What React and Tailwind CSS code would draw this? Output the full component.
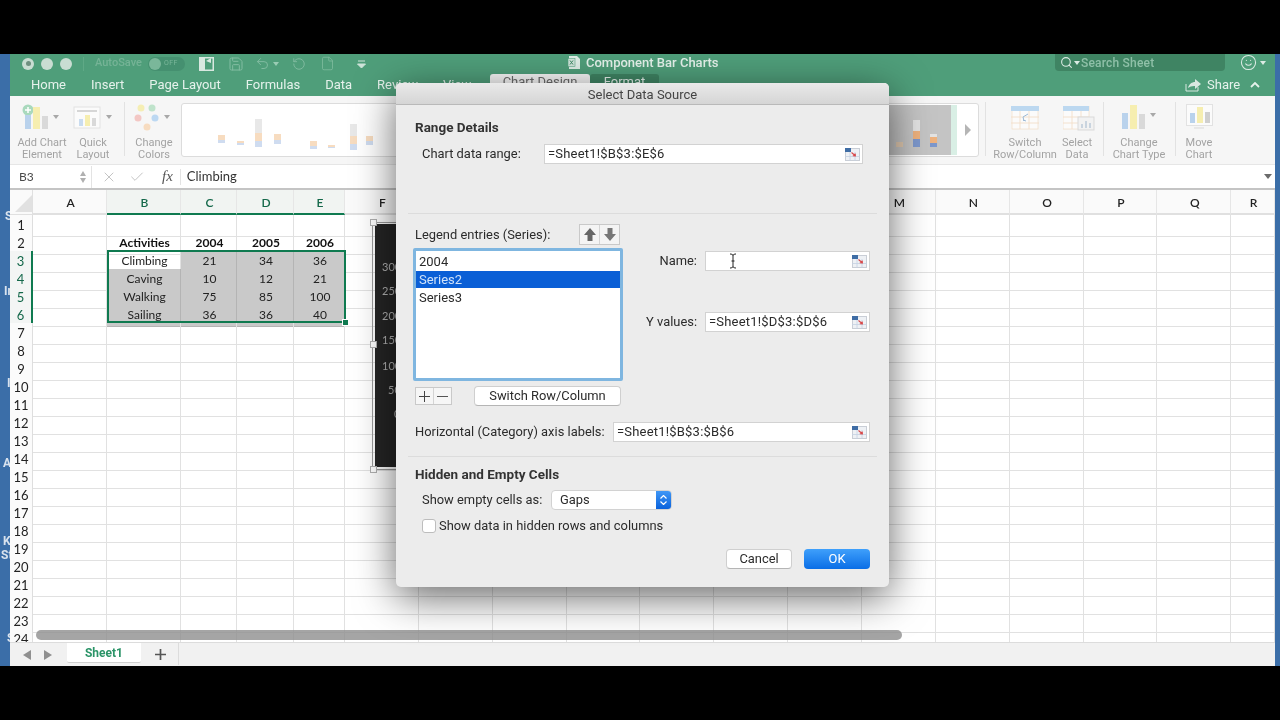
import React from "react";
import { Search, Smile, Save, Undo2, RotateCw, File as FileIcon, X, Check } from "lucide-react";

const COLS = ["A","B","C","D","E","F","G","H","I","J","K","L","M","N","O","P","Q","R"];
const GRID = "grid grid-cols-[23px_74px_74px_56px_57px_51px_repeat(12,73.86px)_1fr]";
const DATA = {
  2: ["Activities","2004","2005","2006"],
  3: ["Climbing","21","34","36"],
  4: ["Caving","10","12","21"],
  5: ["Walking","75","85","100"],
  6: ["Sailing","36","36","40"],
};

function RibbonItem({ width, ml = 0, l1, l2, children }) {
  return (
    <div className="flex flex-col items-center shrink-0" style={{ width, marginLeft: ml }}>
      <div className="h-[41px] w-full flex items-start justify-center pt-[10px]">{children}</div>
      <div className="text-[11px] leading-[11.5px] text-[#a3a3a3] text-center whitespace-nowrap">{l1}<br />{l2}</div>
    </div>
  );
}

function Sep() {
  return <div className="w-px h-[54px] bg-[#e2e2e2] mt-[6px] shrink-0" />;
}

function RangeIcon() {
  return (
    <svg width="15" height="13" viewBox="0 0 15 13" className="shrink-0">
      <rect x="0.5" y="0.5" width="14" height="12" fill="#eef1f5" stroke="#c9ced6" />
      <rect x="0" y="0" width="6" height="4" fill="#3f6da5" />
      <path d="M0 8.5h15M5 4v9M10 4v9" stroke="#c4d2e2" strokeWidth="0.8" />
      <path d="M6.500 4.500l3.500 3M7.800 7.800l2.600.2-.3-2.500" stroke="#d8484a" strokeWidth="1.100" fill="none" />
    </svg>
  );
}

function RangeInput({ w, value }) {
  return (
    <div className="h-[20px] bg-white border border-[#d2d2d2] flex items-center justify-between pl-[3px] pr-[2px] shrink-0 text-[13px] tracking-[0.2px] text-[#2b2b2b]" style={{ width: w }}>
      <span>{value}</span>
      <RangeIcon />
    </div>
  );
}

function Thumb({ bars, w }) {
  return (
    <svg width={w} height="54" viewBox={`0 0 ${w} 54`} className="shrink-0">
      {bars.map((b, i) => (
        <g key={i}>
          <rect x={b[0]} y={b[1]} width="7" height={b[2]} fill="#e8e8e8" />
          <rect x={b[0]} y={b[1] + b[2]} width="7" height={b[3]} fill="#f7dcc0" />
          <rect x={b[0]} y={b[1] + b[2] + b[3]} width="7" height={b[4]} fill="#cfdcf0" />
        </g>
      ))}
    </svg>
  );
}

export default function App() {
  const rows = [];
  for (let r = 1; r <= 24; r++) rows.push(r);
  return (
    <div className="relative w-[1280px] h-[720px] bg-black overflow-hidden flex flex-col font-['Roboto',sans-serif] blur-[0.4px]">
      <div className="h-[54px] shrink-0 bg-black" />
      <div className="flex h-[612px] shrink-0">
        {/* desktop strip left */}
        <div className="relative w-[10px] shrink-0 bg-[#3b6ea8] overflow-hidden text-white/80 text-[12px] font-bold">
          <span className="absolute left-[5px] top-[153px]">S</span>
          <span className="absolute left-[4px] top-[228px]">In</span>
          <span className="absolute left-[7px] top-[320px]">I</span>
          <span className="absolute left-[3px] top-[400px]">A</span>
          <span className="absolute left-[3px] top-[478px]">K</span>
          <span className="absolute left-[1px] top-[492px]">St</span>
          <span className="absolute left-[7px] top-[575px]">S</span>
        </div>

        {/* app */}
        <div className="flex-1 min-w-0 flex flex-col bg-white relative">
          {/* title bar */}
          <div className="relative h-[19px] bg-[#4f9e7a] flex items-center shrink-0">
            <div className="ml-[12px] w-[12px] h-[12px] rounded-full bg-[#c9ddd2] flex items-center justify-center"><div className="w-[5px] h-[5px] rounded-full bg-[#6e8f7f]" /></div>
            <div className="ml-[7px] w-[12px] h-[12px] rounded-full bg-[#c9ddd2]" />
            <div className="ml-[7px] w-[12px] h-[12px] rounded-full bg-[#c9ddd2]" />
            <div className="ml-[11px] w-px h-[14px] bg-[#5fa986]" />
            <span className="ml-[11px] text-[11px] font-medium text-[#75b396]">AutoSave</span>
            <div className="ml-[6px] w-[37px] h-[14px] rounded-full bg-[#459070] flex items-center">
              <div className="ml-[1px] w-[12px] h-[12px] rounded-full bg-[#7ab79a]" />
              <span className="ml-[3px] text-[7px] text-[#7ab79a] tracking-[0.5px]">OFF</span>
            </div>
            <svg width="15" height="14" viewBox="0 0 15 14" className="ml-[14px]">
              <rect x="0.75" y="0.75" width="13.5" height="12.5" fill="none" stroke="#d8e8e0" strokeWidth="1.5" />
              <rect x="1" y="1" width="5" height="12" fill="#d8e8e0" />
              <path d="M7 4l5-3v5z" fill="#d8e8e0" />
            </svg>
            <Save size={16} strokeWidth={1.5} className="ml-[14px] text-[#83bda2]" />
            <Undo2 size={15} strokeWidth={1.5} className="ml-[11px] text-[#83bda2]" />
            <svg width="6" height="4" viewBox="0 0 6 4" className="ml-[3px]"><path d="M0 0h6L3 4z" fill="#9accb4" /></svg>
            <RotateCw size={14} strokeWidth={1.5} className="ml-[13px] text-[#83bda2] -scale-x-100" />
            <FileIcon size={15} strokeWidth={1.2} className="ml-[14px] text-[#83bda2]" />
            <svg width="9" height="8" viewBox="0 0 9 8" className="ml-[22px]"><path d="M1 1h7M0.5 4h8L4.5 8z" stroke="#cfe4da" fill="#cfe4da" strokeWidth="1" /></svg>

            <div className="absolute left-[558px] -top-[1px] h-full flex items-center">
              <svg width="13" height="15" viewBox="0 0 13 15" className="mr-[5px]">
                <path d="M1 1h8l3 3v10H1z" fill="#dfeee7" />
                <rect x="0" y="3.5" width="7" height="8" fill="#cfe4da" stroke="#5aa584" strokeWidth="0.6" />
                <path d="M2 5.5l3 4M5 5.5l-3 4" stroke="#3f8a67" strokeWidth="1" />
              </svg>
              <span className="text-[13px] font-medium text-[#e6f2ec] whitespace-nowrap">Component Bar Charts</span>
            </div>

            <div className="absolute left-[1045px] top-0 w-[170px] h-[17px] bg-[#3f8463] rounded-b-[4px] flex items-center pl-[5px] text-[#8fc0a8]">
              <Search size={13} strokeWidth={2} className="text-[#dcebe4]" />
              <svg width="6" height="4" viewBox="0 0 6 4" className="ml-[1px]"><path d="M0 0h6L3 4z" fill="#dcebe4" /></svg>
              <span className="ml-[1px] text-[12px] font-medium tracking-[0.2px]">Search Sheet</span>
            </div>
            <Smile size={17} strokeWidth={1.5} className="absolute left-[1230px] top-0 text-[#dcebe4]" />
            <svg width="6" height="4" viewBox="0 0 6 4" className="absolute left-[1250px] top-[7px]"><path d="M0 0h6L3 4z" fill="#dcebe4" /></svg>
          </div>

          {/* tab row */}
          <div className="relative h-[23px] bg-[#4f9e7a] flex items-center shrink-0 pl-[21px] gap-[25px] text-[13px] text-[#e6f2ec]">
            <span>Home</span>
            <span>Insert</span>
            <span>Page Layout</span>
            <span>Formulas</span>
            <span>Data</span>
            <span>Review</span>
            <span>View</span>
            <div className="absolute left-[480px] bottom-0 flex items-end">
              <div className="w-[100px] h-[22px] bg-[#f6f6f6] rounded-t-[3px] text-center leading-[16px] text-[#6b6b6b]">Chart Design</div>
              <div className="w-[69px] h-[22px] bg-[#3f8463] rounded-t-[3px] text-center leading-[16px]">Format</div>
            </div>
            <div className="absolute left-[1175px] top-0 h-full flex items-center">
              <svg width="17" height="14" viewBox="0 0 17 14" className="mr-[5px]">
                <path d="M1 6v7h12V9" fill="none" stroke="#d8e8e0" strokeWidth="1" />
                <path d="M3 10c1-4 4-6 7-6V1l6 5-6 5V8C7 7.8 5 8.500 3 10z" fill="#d8e8e0" />
              </svg>
              <span>Share</span>
              <svg width="10" height="6" viewBox="0 0 10 6" className="ml-[10px]"><path d="M1 5l4-4 4 4" stroke="#e6f2ec" strokeWidth="1.8" fill="none" /></svg>
            </div>
          </div>

          {/* ribbon */}
          <div className="h-[69px] bg-[#f6f6f6] flex items-start shrink-0 border-b border-[#e6e6e6]">
            <RibbonItem width={52} ml={6} l1="Add Chart" l2="Element">
              <svg width="44" height="26" viewBox="0 0 44 26" className="-mt-[2px]">
                <circle cx="8" cy="6" r="5.500" fill="#a9d9bd" />
                <path d="M8 3v6M5 6h6" stroke="#fff" strokeWidth="1.500" />
                <rect x="5" y="11" width="6" height="14" fill="#b9d2ec" />
                <rect x="13" y="3" width="7" height="22" fill="#f6eeb0" />
                <rect x="22" y="12" width="6" height="13" fill="#d9d9d9" />
                <path d="M33 11h6l-3 4z" fill="#a8a8a8" />
              </svg>
            </RibbonItem>
            <RibbonItem width={50} l1="Quick" l2="Layout">
              <svg width="40" height="24" viewBox="0 0 40 24">
                <rect x="1" y="1" width="26" height="21" fill="#fbfbfb" stroke="#e2e2e2" />
                <rect x="4" y="4" width="20" height="2" fill="#d6d6d6" />
                <rect x="6" y="13" width="4" height="7" fill="#c9dcf0" />
                <rect x="12" y="9" width="5" height="11" fill="#f6eeb0" />
                <rect x="19" y="12" width="4" height="8" fill="#d9d9d9" />
                <path d="M33 9h6l-3 4z" fill="#a8a8a8" />
              </svg>
            </RibbonItem>
            <div className="ml-[6px]"><Sep /></div>
            <RibbonItem width={50} ml={4} l1="Change" l2="Colors">
              <svg width="40" height="27" viewBox="0 0 40 27" className="-mt-[2px]">
                <circle cx="7" cy="4" r="3.500" fill="#f5eeb4" />
                <circle cx="18" cy="4" r="3.500" fill="#bfe3cb" />
                <circle cx="4" cy="14" r="3.500" fill="#f3c7c4" />
                <circle cx="21" cy="14" r="3.500" fill="#bcd8f2" />
                <circle cx="13" cy="23" r="3.500" fill="#f7dcc0" />
                <path d="M30 11h6l-3 4z" fill="#a8a8a8" />
              </svg>
            </RibbonItem>
            {/* gallery */}
            <div className="ml-[2px] mt-[7px] w-[798px] h-[54px] bg-white border border-[#dcdcdc] rounded-[3px] flex items-center overflow-hidden shrink-0 relative">
              <div className="w-[24px] shrink-0" />
              <Thumb w={92} bars={[[12,32,0,5,3],[31,38,0,2,2],[49,16,14,8,6],[68,31,0,6,4]]} />
              <Thumb w={92} bars={[[12,38,0,5,3],[30,42,0,2,1],[52,21,12,8,6],[68,33,0,5,4]]} />
              <div className="flex-1" />
              <div className="w-[75px] h-[50px] bg-[#c4c4c4] border-r-[6px] border-[#d9efe5] mr-[21px] shrink-0 relative flex items-end justify-center gap-[10px] pb-[8px]">
                <div className="w-[7px] h-[5px] bg-[#e0c9b0]" />
                <div className="w-[7px] h-[27px] bg-[linear-gradient(#e3e3e3_40%,#eeb27e_40%,#eeb27e_72%,#7d98cc_72%)]" />
                <div className="w-[7px] h-[13px] bg-[linear-gradient(#e3e3e3_25%,#eeb27e_25%,#eeb27e_70%,#7d98cc_70%)]" />
              </div>
              <svg width="8" height="12" viewBox="0 0 8 12" className="absolute right-[6px] top-[20px]"><path d="M1 0l6 6-6 6z" fill="#b5b5b5" /></svg>
            </div>
            <div className="ml-[6px]"><Sep /></div>
            <RibbonItem width={60} ml={9} l1="Switch" l2="Row/Column">
              <svg width="28" height="24" viewBox="0 0 28 24">
                <rect x="1" y="0" width="26" height="23" fill="#fbfbfb" stroke="#f0d9c0" strokeWidth="0.6" />
                <rect x="0" y="0" width="28" height="5" fill="#bcd8f0" />
                <path d="M0 11h28M0 17h28M9 5v18M18 5v18" stroke="#f3dcc4" strokeWidth="0.8" />
                <path d="M17 8l-5 3 1 4M15 15l-3-1" stroke="#9bb9d6" strokeWidth="1" fill="none" />
              </svg>
            </RibbonItem>
            <RibbonItem width={44} l1="Select" l2="Data">
              <svg width="32" height="25" viewBox="0 0 32 25" className="ml-[4px]">
                <rect x="0" y="0" width="26" height="23" fill="#fbfbfb" stroke="#f0d9c0" strokeWidth="0.6" />
                <rect x="0" y="0" width="26" height="5" fill="#bcd8f0" />
                <path d="M0 11h26M0 17h26M9 5v18M18 5v18" stroke="#f3dcc4" strokeWidth="0.8" />
                <rect x="15" y="11" width="16" height="13" fill="#f2f2f2" stroke="#d9d9d9" />
                <path d="M19 22v-4M23 22v-7M27 22v-5" stroke="#c9d4df" strokeWidth="2" />
              </svg>
            </RibbonItem>
            <div className="ml-[4px]"><Sep /></div>
            <RibbonItem width={62} ml={4} l1="Change" l2="Chart Type">
              <svg width="36" height="25" viewBox="0 0 36 25" className="-mt-[2px]">
                <rect x="1" y="9" width="6" height="16" fill="#b9d2ec" />
                <rect x="9" y="1" width="7" height="24" fill="#f6eeb0" />
                <rect x="18" y="10" width="6" height="15" fill="#d9d9d9" />
                <path d="M29 9h6l-3 4z" fill="#a8a8a8" />
              </svg>
            </RibbonItem>
            <div className="ml-[5px]"><Sep /></div>
            <RibbonItem width={38} ml={4} l1="Move" l2="Chart">
              <svg width="27" height="25" viewBox="0 0 27 25" className="-mt-[2px]">
                <rect x="0.500" y="0.500" width="26" height="21" fill="#fbfbfb" stroke="#e2e2e2" />
                <rect x="4" y="9" width="5" height="10" fill="#b9d2ec" />
                <rect x="11" y="3" width="6" height="16" fill="#f6eeb0" />
                <rect x="19" y="8" width="5" height="11" fill="#cfcfcf" />
                <path d="M8 24h10" stroke="#d9d9d9" strokeWidth="1" />
              </svg>
            </RibbonItem>
          </div>

          {/* formula bar */}
          <div className="h-[25px] bg-white border-b-2 border-[#c4c4c4] flex items-center shrink-0 text-[12px] text-[#3a3a3a] font-['Lato',sans-serif]">
            <span className="ml-[9px] w-[53px] text-[#4a4a4a]">B3</span>
            <div className="ml-[8px] flex flex-col gap-[2px]">
              <svg width="6" height="5" viewBox="0 0 6 5"><path d="M0 5h6L3 0z" fill="#b0b0b0" /></svg>
              <svg width="6" height="5" viewBox="0 0 6 5"><path d="M0 0h6L3 5z" fill="#b0b0b0" /></svg>
            </div>
            <div className="ml-[5px] w-px h-[22px] bg-[#e3e3e3]" />
            <X size={16} strokeWidth={1.5} className="ml-[9px] text-[#c4c4c4]" />
            <Check size={16} strokeWidth={1.5} className="ml-[12px] text-[#c4c4c4]" />
            <span className="ml-[17px] font-['Liberation_Serif',serif] italic text-[15px] text-[#555]">fx</span>
            <div className="ml-[7px] w-px h-[16px] bg-[#e3e3e3]" />
            <span className="ml-[6px] text-[13px] text-[#333]">Climbing</span>
            <div className="flex-1" />
            <svg width="8" height="5" viewBox="0 0 8 5" className="mr-[3px]"><path d="M0 0h8L4 5z" fill="#6b6b6b" /></svg>
          </div>

          {/* sheet */}
          <div className="relative h-[452px] overflow-hidden shrink-0 font-['Lato',sans-serif] text-[12px] text-[#222]">
            <div className={`${GRID} h-[25px] bg-[#fafafa]`}>
              <div className="relative border-r border-b border-[#e0e0e0]">
                <svg width="17" height="17" viewBox="0 0 17 17" className="absolute left-[5px] top-[5px]"><path d="M0 17L17 0v17z" fill="#e1e1e1" /></svg>
              </div>
              {COLS.map((c) => {
                const sel = c === "B" || c === "C" || c === "D" || c === "E";
                return (
                  <div key={c} className={sel
                    ? "flex items-center justify-center pl-[2px] pt-[3px] bg-[#f1f4f2] border-r border-[#e6e6e6] border-b-2 border-b-[#0f7a50] text-[#14684a] font-semibold"
                    : "flex items-center justify-center pl-[2px] pt-[3px] border-r border-b-2 border-r-[#e6e6e6] border-b-[#e0e0e0] font-semibold text-[#222]"}>{c}</div>
                );
              })}
            </div>
            {rows.map((r) => (
              <div key={r} className={`${GRID} h-[18px]`}>
                <div className={r >= 3 && r <= 6
                  ? "flex items-center justify-center pt-[1px] bg-[#f3f5f4] text-[#14684a] text-[13px] border-r-2 border-r-[#0f7a50] border-b border-b-[#e0e0e0]"
                  : "flex items-center justify-center pt-[1px] bg-[#fbfbfb] text-[#222] text-[13px] border-r border-r-[#dedede] border-b border-b-[#e0e0e0]"}>{r}</div>
                {COLS.map((c, i) => {
                  const d = DATA[r];
                  const v = d && i >= 1 && i <= 4 ? d[i - 1] : null;
                  const grey = r >= 3 && r <= 6 && i >= 1 && i <= 4 && !(r === 3 && i === 1);
                  return (
                    <div key={c} className={`flex items-center justify-center pl-[2px] border-r border-b ${grey ? "bg-[#c9c9c9] border-[#b4b4b4]" : "border-[#e1e1e1]"} ${r === 2 ? "font-bold text-[#111]" : ""}`}>{v}</div>
                  );
                })}
              </div>
            ))}

            {/* selection */}
            <div className="absolute left-[97px] top-[60px] w-[239px] h-[73px] border-2 border-[#0f7a50]" />
            <div className="absolute left-[333px] top-[130px] w-[5px] h-[5px] bg-[#0f7a50] outline outline-white" />

            {/* chart object */}
            <div className="absolute left-[365px] top-[34px] w-[60px] h-[243px] bg-[#252525] text-[#b5b5b5] text-[11px]">
              <span className="absolute left-[7px] top-[35px]">300</span>
              <span className="absolute left-[7px] top-[59px]">250</span>
              <span className="absolute left-[7px] top-[84px]">200</span>
              <span className="absolute left-[7px] top-[108px]">150</span>
              <span className="absolute left-[7px] top-[134px]">100</span>
              <span className="absolute left-[13px] top-[158px]">50</span>
              <span className="absolute left-[19px] top-[182px]">0</span>
            </div>
            <div className="absolute left-[362px] top-[32px] w-[70px] h-[248px] border border-[#9a9a9a] bg-transparent" />
            <div className="absolute left-[360px] top-[29px] w-[7px] h-[7px] bg-white border border-[#b0b0b0]" />
            <div className="absolute left-[360px] top-[151px] w-[7px] h-[7px] bg-white border border-[#b0b0b0]" />
            <div className="absolute left-[360px] top-[276px] w-[7px] h-[7px] bg-white border border-[#b0b0b0]" />

            {/* scrollbar */}
            <div className="absolute left-[26px] top-[440px] w-[866px] h-[10px] rounded-full bg-[#8e8e8e]/80" />
          </div>

          {/* sheet tabs */}
          <div className="h-[24px] bg-[#f1f1f1] flex items-start shrink-0 border-t border-[#dcdcdc]">
            <svg width="8" height="10" viewBox="0 0 8 10" className="ml-[13px] mt-[7px]"><path d="M8 0L0 5l8 5z" fill="#8f8f8f" /></svg>
            <svg width="8" height="10" viewBox="0 0 8 10" className="ml-[13px] mt-[7px]"><path d="M0 0l8 5-8 5z" fill="#8f8f8f" /></svg>
            <div className="ml-[15px] w-[74px] h-[20px] bg-white rounded-b-[2px] border-b border-[#cfcfcf] text-center text-[12px] font-bold leading-[21px] text-[#2b9468]">Sheet1</div>
            <svg width="11" height="11" viewBox="0 0 11 11" className="ml-[14px] mt-[6px]"><path d="M5.500 0v11M0 5.500h11" stroke="#555" strokeWidth="1.700" /></svg>
            <div className="ml-[12px] w-px h-[22px] bg-[#dcdcdc]" />
          </div>
        </div>

        {/* desktop strip right */}
        <div className="w-[5px] shrink-0 bg-[#3b6ea8]" />
      </div>
      <div className="h-[54px] shrink-0 bg-black" />

      {/* dialog */}
      <div className="absolute left-[396px] top-[83px] w-[493px] h-[504px] rounded-[5px] bg-[#ececec] shadow-[0_10px_40px_rgba(0,0,0,0.6)] flex flex-col overflow-hidden text-[12.9px] text-[#2b2b2b]">
        <div className="h-[22px] shrink-0 bg-[linear-gradient(#e9e9e9,#d5d5d5)] border-b border-[#b9b9b9] text-center leading-[23px] text-[13px] text-[#444]">Select Data Source</div>
        <div className="px-[12px] flex-1 flex flex-col">
          <div className="px-[7px]">
            <div className="mt-[14px] h-[16px] leading-[16px] font-bold text-[#333] text-[13.5px]">Range Details</div>
            <div className="mt-[9px] flex items-center pl-[7px] pr-[7px]">
              <span className="w-[122px] shrink-0">Chart data range:</span>
              <RangeInput w={319} value="=Sheet1!$B$3:$E$6" />
            </div>
          </div>
          <div className="mt-[49px] h-px bg-[#dcdcdc]" />
          <div className="px-[7px] flex">
            <div className="w-[210px] shrink-0 -ml-[2px]">
              <div className="mt-[10px] h-[21px] flex items-center pl-[2px]">
                <span className="w-[164px] shrink-0">Legend entries (Series):</span>
                <div className="flex w-[41px] h-[21px] border border-[#c9c9c9] bg-[#f4f4f4]">
                  <div className="flex-1 flex items-center justify-center border-r border-[#d4d4d4]">
                    <svg width="12" height="13" viewBox="0 0 12 13"><path d="M6 0l6 7H8.500v6h-5V7H0z" fill="#666" /></svg>
                  </div>
                  <div className="flex-1 flex items-center justify-center">
                    <svg width="12" height="13" viewBox="0 0 12 13"><path d="M6 13l6-7H8.500V0h-5v6H0z" fill="#777" /></svg>
                  </div>
                </div>
              </div>
              <div className="mt-[3px] h-[133px] border-[3px] border-[#7fb6e0] rounded-[2px] bg-white pt-[2px] text-[13px]">
                <div className="h-[18px] leading-[18px] pl-[3px]">2004</div>
                <div className="h-[17px] leading-[17px] pl-[3px] bg-[#0a5fd6] text-[#cfe2fa]">Series2</div>
                <div className="h-[19px] leading-[19px] pl-[3px]">Series3</div>
              </div>
              <div className="mt-[6px] flex items-start pl-[2px]">
                <div className="flex w-[37px] h-[18px] border border-[#c9c9c9] bg-[#f6f6f6] text-[#333]">
                  <div className="flex-1 flex items-center justify-center border-r border-[#d4d4d4]">
                    <svg width="11" height="11" viewBox="0 0 11 11"><path d="M5.500 0v11M0 5.500h11" stroke="#444" strokeWidth="1" /></svg>
                  </div>
                  <div className="flex-1 flex items-center justify-center">
                    <svg width="11" height="11" viewBox="0 0 11 11"><path d="M0 5.500h11" stroke="#555" strokeWidth="1" /></svg>
                  </div>
                </div>
                <div className="ml-[22px] -mt-[1px] w-[147px] h-[20px] bg-white border border-[#cfcfcf] border-b-[#b5b5b5] rounded-[4px] text-center leading-[18px]">Switch Row/Column</div>
              </div>
            </div>
            <div className="flex-1 relative">
              <div className="mt-[37px] flex items-center justify-end">
                <span className="mr-[8px]">Name:</span>
                <RangeInput w={165} value="" />
              </div>
              <div className="mt-[41px] flex items-center justify-end">
                <span className="mr-[8px]">Y values:</span>
                <RangeInput w={165} value="=Sheet1!$D$3:$D$6" />
              </div>
              <svg width="8" height="16" viewBox="0 0 8 16" className="absolute left-[106px] top-[39px]"><path d="M1 1c1.500 0 3 .5 3 1.500C4 1.500 5.500 1 7 1M4 2.500v11M1 15c1.500 0 3-.5 3-1.500C4 14.500 5.500 15 7 15M2.500 8h3" stroke="#222" strokeWidth="1" fill="none" /></svg>
            </div>
          </div>
          <div className="px-[7px] mt-[16px] flex items-center justify-between">
            <span className="whitespace-nowrap">Horizontal (Category) axis labels:</span>
            <RangeInput w={257} value="=Sheet1!$B$3:$B$6" />
          </div>
          <div className="mt-[14px] h-px bg-[#dcdcdc]" />
          <div className="px-[7px]">
            <div className="mt-[9px] h-[16px] leading-[16px] font-bold text-[#333] text-[13.5px]">Hidden and Empty Cells</div>
            <div className="mt-[8px] pl-[7px] flex items-center">
              <span className="w-[129px] shrink-0">Show empty cells as:</span>
              <div className="w-[121px] h-[20px] bg-white border border-[#d2d2d2] rounded-[4px] flex items-center overflow-hidden">
                <span className="flex-1 pl-[8px]">Gaps</span>
                <div className="w-[15px] h-full bg-[linear-gradient(#3f97f6,#0a62dc)] flex flex-col items-center justify-center gap-[2px]">
                  <svg width="7" height="4" viewBox="0 0 7 4"><path d="M0.500 3.500l3-3 3 3" stroke="#fff" strokeWidth="1.200" fill="none" /></svg>
                  <svg width="7" height="4" viewBox="0 0 7 4"><path d="M0.500 0.500l3 3 3-3" stroke="#fff" strokeWidth="1.200" fill="none" /></svg>
                </div>
              </div>
            </div>
            <div className="mt-[6px] pl-[7px] flex items-center">
              <div className="w-[14px] h-[14px] bg-white border border-[#bdbdbd] rounded-[3px] shrink-0" />
              <span className="ml-[3px]">Show data in hidden rows and columns</span>
            </div>
            <div className="mt-[14px] flex justify-end gap-[12px]">
              <div className="w-[66px] h-[20px] bg-white border border-[#cfcfcf] border-b-[#b5b5b5] rounded-[4px] text-center leading-[18px]">Cancel</div>
              <div className="w-[66px] h-[20px] bg-[linear-gradient(#3fa0fb,#0a6ee6)] rounded-[4px] text-center leading-[20px] text-white">OK</div>
            </div>
          </div>
        </div>
      </div>
    </div>
  );
}
